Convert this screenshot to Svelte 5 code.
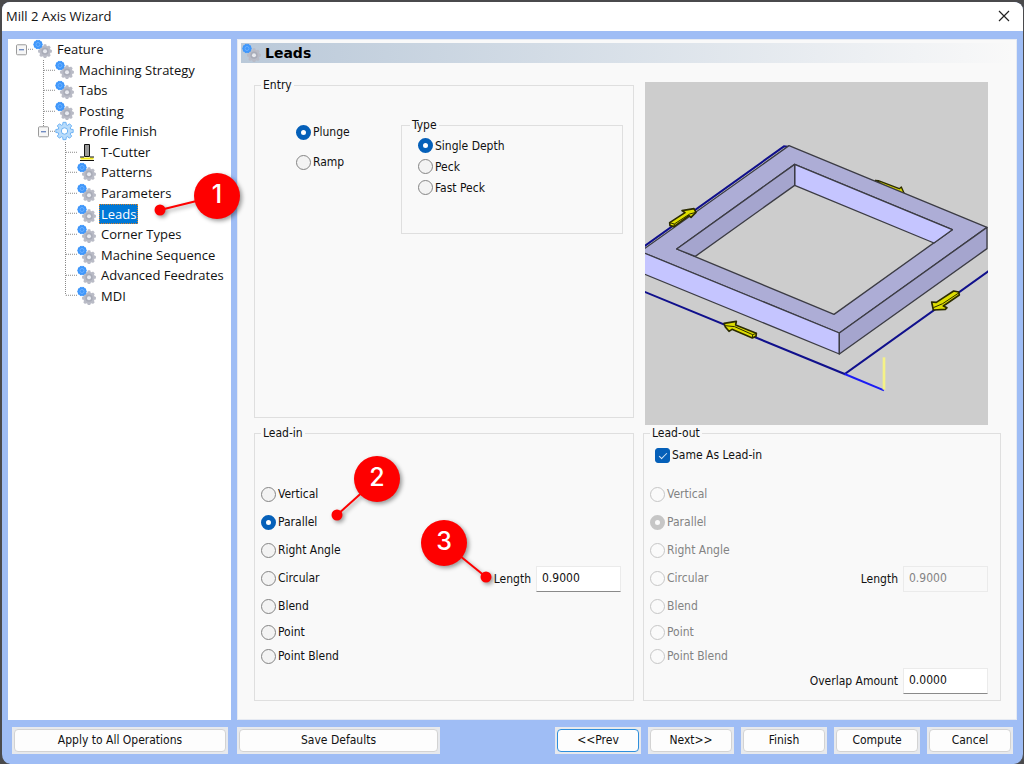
<script>
    const tree = [
        { label: 'Feature', depth: 0, icon: 'gears', toggle: true },
        { label: 'Machining Strategy', depth: 1, icon: 'gears' },
        { label: 'Tabs', depth: 1, icon: 'gears' },
        { label: 'Posting', depth: 1, icon: 'gears' },
        { label: 'Profile Finish', depth: 1, icon: 'profile', toggle: true, last: true },
        { label: 'T-Cutter', depth: 2, icon: 'cutter' },
        { label: 'Patterns', depth: 2, icon: 'gears' },
        { label: 'Parameters', depth: 2, icon: 'gears' },
        { label: 'Leads', depth: 2, icon: 'gears' },
        { label: 'Corner Types', depth: 2, icon: 'gears' },
        { label: 'Machine Sequence', depth: 2, icon: 'gears' },
        { label: 'Advanced Feedrates', depth: 2, icon: 'gears' },
        { label: 'MDI', depth: 2, icon: 'gears', last: true }
    ];
    const leadTypes = ['Vertical', 'Parallel', 'Right Angle', 'Circular', 'Blend', 'Point', 'Point Blend'];
    const actions = ['<<Prev', 'Next>>', 'Finish', 'Compute', 'Cancel'];
    const callouts = [
        { n: 1, x: 217, y: 196, dx: 160, dy: 210 },
        { n: 2, x: 377, y: 479, dx: 337, dy: 515 },
        { n: 3, x: 444, y: 543, dx: 486, dy: 577 }
    ];

    let selected = $state('Leads');
    let entry = $state('Plunge');
    let entryType = $state('Single Depth');
    let leadIn = $state('Parallel');
    let leadOutOwn = $state('Parallel');
    let sameAsLeadIn = $state(true);
    let length = $state('0.9000');
    let lengthOutOwn = $state('0.9000');
    let overlap = $state('0.0000');

    let leadOut = $derived(sameAsLeadIn ? leadIn : leadOutOwn);
    let lengthOut = $derived(sameAsLeadIn ? length : lengthOutOwn);

    function gear(cx, cy, outer, inner, teeth) {
        const pts = [];
        const step = (Math.PI * 2) / teeth;
        for (let i = 0; i < teeth; i++) {
            const a = i * step;
            for (const [r, o] of [[inner, -0.36], [outer, -0.22], [outer, 0.22], [inner, 0.36]]) {
                pts.push((cx + r * Math.cos(a + o * step)).toFixed(2) + ' ' + (cy + r * Math.sin(a + o * step)).toFixed(2));
            }
        }
        return 'M' + pts.join('L') + 'Z';
    }
</script>

{#snippet gears()}
    <svg class="icon" width="22" height="20" viewBox="0 0 22 20" aria-hidden="true">
        <path d={gear(13, 12.2, 7, 5.7, 8)} fill="#b9bbc6" />
        <circle cx="13" cy="12.2" r="3.6" fill="#a9acb8" />
        <circle cx="13" cy="12.2" r="2" fill="#e8eaf0" />
        <path d={gear(6, 5.5, 4.8, 4.3, 10)} fill="#3f97fb" />
        <circle cx="6" cy="5.5" r="2" fill="none" stroke="#6bb0ff" />
    </svg>
{/snippet}

{#snippet profileIcon()}
    <svg class="icon" width="22" height="20" viewBox="0 0 22 20" aria-hidden="true">
        <path d={gear(10.5, 10, 8.8, 6.5, 8)} fill="#b9dcfb" stroke="#6db2f4" />
        <circle cx="10.5" cy="10" r="3.2" fill="#fff" stroke="#6db2f4" />
    </svg>
{/snippet}

{#snippet cutterIcon()}
    <svg class="icon" width="22" height="20" viewBox="0 0 22 20" aria-hidden="true">
        <path d="M8.5 2.5h5v12h-5z" fill="#999" stroke="#111" />
        <path d="M4.5 15.5h13v2h-13z" fill="#f2ea18" />
        <path d="M4 15h4M14 15h4M4 18.5h14" stroke="#111" />
    </svg>
{/snippet}

<div class="window">
    <header class="titlebar">
        <span>Mill 2 Axis Wizard</span>
        <button class="close" aria-label="Close">
            <svg width="12" height="12" viewBox="0 0 12 12"><path d="M1 1l10 10M11 1L1 11" stroke="#222" stroke-width="1.2" /></svg>
        </button>
    </header>

    <div class="body">
        <nav class="tree">
            <ul>
                {#each tree as node}
                    <li>
                        {#each Array(node.depth) as _}<span class="indent"></span>{/each}
                        <svg class="branch" width="22" height="100%" aria-hidden="true">
                            {#if node.depth > 0}
                                <line x1="11.5" y1="0" x2="11.5" y2={node.last ? '50%' : '100%'} />
                            {/if}
                            <line x1="12" y1="50%" x2="24" y2="50%" />
                            {#if node.toggle}
                                <svg x="6" y="50%" width="11" height="11" overflow="visible">
                                    <rect x="0.5" y="-4.5" width="10" height="10" rx="1" fill="#f6f6f6" stroke="#9a9a9a" />
                                    <path d="M3 0.5h5" stroke="#3f64ad" />
                                </svg>
                            {/if}
                        </svg>
                        {#if node.icon === 'gears'}
                            {@render gears()}
                        {:else if node.icon === 'profile'}
                            {@render profileIcon()}
                        {:else}
                            {@render cutterIcon()}
                        {/if}
                        <button class="node" class:selected={selected === node.label} onclick={() => (selected = node.label)}>{node.label}</button>
                    </li>
                {/each}
            </ul>
        </nav>

        <main class="panel">
            <div class="banner">
                {@render gears()}
                <h1>Leads</h1>
            </div>

            <div class="groups">
                <fieldset class="entry">
                    <legend>Entry</legend>
                    <div class="entry-body">
                        <div class="modes">
                            {#each ['Plunge', 'Ramp'] as mode}
                                <label><input type="radio" name="entry" value={mode} bind:group={entry} />{mode}</label>
                            {/each}
                        </div>
                        <fieldset class="type">
                            <legend>Type</legend>
                            {#each ['Single Depth', 'Peck', 'Fast Peck'] as t}
                                <label><input type="radio" name="entry-type" value={t} bind:group={entryType} />{t}</label>
                            {/each}
                        </fieldset>
                    </div>
                </fieldset>

                <svg class="preview" viewBox="15 23 1029 1029" role="img" aria-label="Toolpath preview">
                    <rect x="15" y="23" width="1029" height="1029" fill="#cdcdcd" />
                    <g fill="none" stroke="#10108c" stroke-width="6">
                        <path d="M10 518L432 216L450 218" />
                        <path d="M10 651L614 899L1046 590" />
                        <path d="M614 899L732 948" stroke="#1c1cf4" />
                        <path d="M732 946V849" stroke="#f5f287" stroke-width="8" />
                    </g>
                    <g fill="#d6d600" stroke="#2c2c00" stroke-width="4" stroke-linejoin="round">
                        <path d="M706 318L715 319L778 343L784 338L793 358L760 350Z" />
                    </g>
                    <g stroke="#3c3c44" stroke-width="4" stroke-linejoin="round">
                        <path d="M447 214L1041 459L598 776L12 536V524Z M464 270L110 524L582 720L937 466Z" fill="#adadd6" fill-rule="evenodd" />
                        <path d="M10 535L598 776V839L10 598Z" fill="#c5c5ff" />
                        <path d="M598 776L1041 459V523L598 839Z" fill="#a5a5ce" />
                        <path d="M464 270L937 466L882 506L464 333Z" fill="#c5c5ff" />
                        <path d="M464 270V333L166 546L110 524Z" fill="#a5a5ce" />
                    </g>
                    <g fill="#dede00" stroke="#2c2c00" stroke-width="5" stroke-linejoin="round">
                        <path d="M89 445L135 415L126 409L162 403L168 414L153 429L147 424L102 457L90 454Z" />
                        <path d="M89 445L103 449L149 419L168 414M103 449L102 457" fill="none" stroke-width="3" />
                        <path d="M252 747L289 741L287 752L349 777L348 786L337 791L276 765L267 771L256 758Z" />
                        <path d="M256 754L284 757L338 781L349 777M338 781L337 791" fill="none" stroke-width="3" />
                        <path d="M875 683L889 684L941 650L956 653L958 662L910 695L921 700L916 705L880 707Z" />
                        <path d="M880 700L908 688L956 656" fill="none" stroke-width="3" />
                    </g>
                </svg>

                <fieldset class="lead">
                    <legend>Lead-in</legend>
                    <div class="lead-top"></div>
                    <div class="lead-body">
                        <div class="options">
                            {#each leadTypes as t}
                                <label><input type="radio" name="lead-in" value={t} bind:group={leadIn} />{t}</label>
                            {/each}
                        </div>
                        <div class="fields">
                            <label>Length <input type="text" bind:value={length} /></label>
                        </div>
                    </div>
                </fieldset>

                <fieldset class="lead">
                    <legend>Lead-out</legend>
                    <div class="lead-top">
                        <label><input type="checkbox" bind:checked={sameAsLeadIn} />Same As Lead-in</label>
                    </div>
                    <div class="lead-body">
                        <div class="options">
                            {#each leadTypes as t}
                                <label class:disabled={sameAsLeadIn}>
                                    <input type="radio" name="lead-out" value={t} checked={leadOut === t} disabled={sameAsLeadIn} onchange={() => (leadOutOwn = t)} />{t}
                                </label>
                            {/each}
                        </div>
                        <div class="fields">
                            <label>Length <input type="text" value={lengthOut} disabled={sameAsLeadIn} oninput={(e) => (lengthOutOwn = e.currentTarget.value)} /></label>
                            <label>Overlap Amount <input type="text" bind:value={overlap} /></label>
                        </div>
                    </div>
                </fieldset>
            </div>
        </main>
    </div>

    <footer>
        <button class="push apply"><span>Apply to All Operations</span></button>
        <button class="push save"><span>Save Defaults</span></button>
        <div class="actions">
            {#each actions as action, i}
                <button class="push" class:default={i === 0}><span>{action}</span></button>
            {/each}
        </div>
    </footer>

    <svg class="callouts" aria-hidden="true">
        {#each callouts as c}
            <g class="callout">
                <line x1={c.x} y1={c.y} x2={c.dx} y2={c.dy} />
                <circle cx={c.dx} cy={c.dy} r="5.5" />
                <circle cx={c.x} cy={c.y} r="23" />
            </g>
            <text x={c.x} y={c.y + 7}>{c.n}</text>
        {/each}
    </svg>
</div>

<style>
    :global(body) {
        background: #4a4a4c;
    }

    .window {
        position: relative;
        display: flex;
        flex-direction: column;
        box-sizing: border-box;
        min-height: 100vh;
        border: solid #4a4a4c;
        border-width: 2px 1px 0 2px;
        border-radius: 10px;
        background: #9fbdf5;
        color: #111;
        font: 12px/16px 'DejaVu Sans Condensed', 'DejaVu Sans', sans-serif;
        overflow: hidden;
    }

    button {
        border: none;
        padding: 0;
        background: none;
        color: inherit;
        font: inherit;
    }

    .titlebar {
        display: flex;
        align-items: center;
        justify-content: space-between;
        box-sizing: border-box;
        height: 29px;
        padding: 0 13px 1px 4px;
        background: #fff;
        font: 13px/20px 'Open Sans', sans-serif;
    }

    .close {
        display: flex;
    }

    .body {
        display: flex;
        flex: 1;
        gap: 6px;
        padding: 8px 6px 0;
    }

    .tree {
        flex: none;
        width: 223px;
        background: #fff;
        font: 13px/18px 'Open Sans', sans-serif;
    }

    .tree ul {
        display: grid;
        grid-auto-rows: 1fr;
        height: 267px;
        margin: 0;
        padding: 0 0 0 2px;
        list-style: none;
    }

    .tree li {
        display: flex;
        align-items: center;
        min-height: 0;
    }

    .indent {
        flex: none;
        width: 22px;
    }

    .branch {
        flex: none;
        align-self: stretch;
        overflow: visible;
    }

    .branch line {
        stroke: #8a8a8a;
        stroke-dasharray: 1 1;
    }

    .icon {
        flex: none;
        display: block;
    }

    .node {
        margin-left: 1px;
        padding: 0 1px;
        border: 1px solid transparent;
        white-space: nowrap;
    }

    .node.selected {
        border: 1px dotted #d9822b;
        background: #0078d7;
        color: #fff;
    }

    .panel {
        flex: 1;
        min-width: 0;
        box-sizing: border-box;
        padding: 3px 3px 17px;
        border: 1px solid #e6eaf2;
        background: #f9f9f9;
    }

    .banner {
        display: flex;
        align-items: center;
        gap: 2px;
        height: 20px;
        background: linear-gradient(90deg, #bac9d9, #f9f9f9);
    }

    h1 {
        margin: 0;
        color: #000;
        font: bold 14px/20px 'DejaVu Sans', sans-serif;
    }

    .groups {
        display: grid;
        grid-template-columns: 380fr 358fr;
        column-gap: 9px;
        padding: 14px 12px 0 13px;
    }

    fieldset {
        min-width: 0;
        box-sizing: border-box;
        margin: 0;
        padding: 0;
        border: 1px solid #dfdfdf;
    }

    legend {
        margin-left: 6px;
        padding: 0 2px;
    }

    label {
        display: flex;
        align-items: center;
        gap: 2px;
        white-space: nowrap;
    }

    .entry {
        margin-bottom: 7px;
    }

    .entry-body {
        display: flex;
        justify-content: space-between;
        padding: 24px 10px 0 41px;
    }

    .modes {
        display: grid;
        grid-auto-rows: 30px;
        align-content: start;
    }

    .type {
        width: 222px;
        height: 117px;
        padding: 2px 0 0 16px;
    }

    .type legend {
        margin-left: -8px;
    }

    .type label {
        height: 21px;
    }

    .preview {
        width: 100%;
        max-width: 343px;
        aspect-ratio: 1;
        margin: 5px 0 0 2px;
    }

    .lead {
        padding: 0 12px 6px 6px;
    }

    .lead legend {
        margin-left: 0;
    }

    .lead-top {
        height: 39px;
        padding: 6px 0 0 5px;
        box-sizing: border-box;
    }

    .lead-body {
        display: flex;
        justify-content: space-between;
    }

    .options {
        display: grid;
        grid-template-rows: repeat(5, 28px) repeat(2, 24px);
    }

    .fields {
        display: flex;
        flex-direction: column;
        align-items: flex-end;
        gap: 76px;
        min-height: 128px;
        padding-top: 86px;
    }

    .fields label {
        gap: 5px;
    }

    .disabled {
        color: #838383;
    }

    input[type='radio'],
    input[type='checkbox'] {
        appearance: none;
        flex: none;
        box-sizing: border-box;
        width: 15px;
        height: 15px;
        margin: 0;
        border: 1px solid #858585;
        background: #f3f3f3;
    }

    input[type='radio'] {
        border-radius: 50%;
    }

    input[type='radio']:checked {
        border: 5px solid #0560b9;
        background: #fff;
    }

    input[type='radio']:disabled {
        border-color: #c6c6c6;
        background: #fafafa;
    }

    input[type='checkbox'] {
        display: grid;
        place-items: center;
        border-radius: 3px;
    }

    input[type='checkbox']:checked {
        border-color: #0560b9;
        background: #0560b9;
    }

    input[type='checkbox']:checked::before {
        content: '';
        width: 8px;
        height: 4px;
        border: solid #d9e8f7;
        border-width: 0 0 1px 1px;
        box-sizing: border-box;
        transform: rotate(-45deg);
    }

    input[type='text'] {
        box-sizing: border-box;
        width: 85px;
        height: 26px;
        padding: 0 5px 3px;
        border: 1px solid #ebebeb;
        border-bottom: 1px solid #8a8a8a;
        background: #fff;
        color: inherit;
        font: inherit;
    }

    input[type='text']:disabled {
        border-color: #ebebeb;
        background: #f9f9f9;
        color: #838383;
    }

    footer {
        display: flex;
        gap: 9px;
        padding: 7px 10px 10px;
    }

    .push {
        height: 27px;
        width: 86px;
        padding: 2px;
        background: #e7e9ed;
    }

    .push span {
        display: block;
        box-sizing: border-box;
        height: 23px;
        border: 1px solid #d3d3d3;
        border-radius: 4px;
        background: #fdfdfd;
        line-height: 21px;
    }

    .push.default span {
        border-color: #2f8fdc;
    }

    .push.apply {
        width: 216px;
    }

    .push.save {
        width: 203px;
    }

    .actions {
        display: flex;
        gap: 7px;
        margin-left: auto;
    }

    .callouts {
        position: absolute;
        top: -2px;
        left: -2px;
        width: 100%;
        height: 100%;
        pointer-events: none;
    }

    .callout {
        fill: #fe0000;
        filter: drop-shadow(2px 2px 2px rgba(0, 0, 0, 0.4));
    }

    .callout line {
        stroke: #fe0000;
        stroke-width: 2px;
    }

    .callouts text {
        fill: #fff;
        font: 500 25px Inter, sans-serif;
        text-anchor: middle;
    }
</style>
